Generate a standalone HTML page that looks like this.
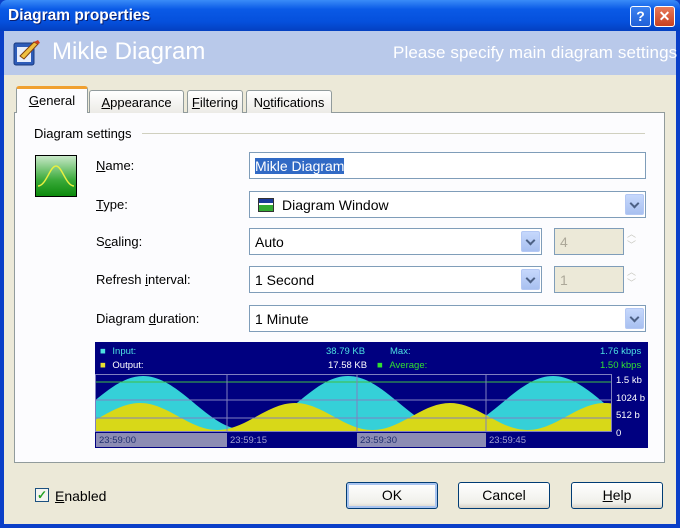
<!DOCTYPE html><html><head><style>
*{box-sizing:border-box;margin:0;padding:0}
body{width:680px;height:528px;overflow:hidden;font-family:"Liberation Sans",sans-serif;font-size:13px;background:#0a3fc8;position:relative}
.a{position:absolute}
.title{left:0;top:0;width:680px;height:31px;background:linear-gradient(#3a8cf8,#0a5ae6 30%,#0550dc 70%,#0440c0);border-radius:7px 7px 0 0}
.title span{position:absolute;left:8px;top:7px;color:#fff;font-weight:bold;font-size:15.5px;text-shadow:1px 1px #0a1e6e}
.tb{top:6px;width:21px;height:21px;border:1px solid #fff;border-radius:3px;color:#fff;font-weight:bold;text-align:center;font-size:14px;line-height:19px}
.win{left:4px;top:31px;width:672px;height:493px;background:#ece9d8}
.hdr{left:4px;top:31px;width:672px;height:44px;background:#b9c9ea}
.lbl{left:96px;font-size:13px;color:#000}
.fld{background:#fff;border:1px solid #7f9db9;height:27px;font-size:14px;padding:5px 0 0 5px}
.dd{position:absolute;right:1px;top:2px;width:19px;height:21px;background:linear-gradient(#c6d8fc,#a8c0f0);border-radius:2px;border:1px solid #b4c8f4}
.dd:after{content:"";position:absolute;left:5px;top:5px;width:5px;height:5px;border-right:2px solid #4d6185;border-bottom:2px solid #4d6185;transform:rotate(45deg)}
.spin{background:#ece9d8;border:1px solid #7f9db9;height:27px;color:#aca899;font-size:14px;padding:5px 0 0 5px}
.btn{top:482px;width:92px;height:27px;border:1px solid #003c74;border-radius:3px;background:linear-gradient(#fff,#f0f0ea 80%,#d6d0c5);text-align:center;line-height:25px;font-size:14px}
.tab{top:90px;height:23px;border:1px solid #919b9c;border-bottom:none;background:linear-gradient(#fff,#ecebe6);font-size:13px;padding:4px 0 0 0;text-align:center;border-radius:3px 3px 0 0;white-space:nowrap}
.ct{font-size:9.5px;color:#fff}
</style></head><body>
<div class="a title"><span>Diagram properties</span>
<div class="a tb" style="left:630px;background:linear-gradient(#3c82f0,#2060d8)">?</div>
<div class="a tb" style="left:654px;background:linear-gradient(#e87a5a,#c84020)">✕</div></div>
<div class="a win"></div>
<div class="a hdr"></div>
<svg class="a" style="left:12px;top:38px" width="30" height="30"><rect x="2" y="5" width="20" height="22" rx="2" fill="#2e5cb8" stroke="#1a3a80"/><rect x="5" y="9" width="14" height="15" fill="#e8eefc"/><path d="M8 18 L22 4 L26 6 L12 21 Z" fill="#f0c040" stroke="#804010"/><path d="M22 4 L26 2 L28 5 L26 6Z" fill="#d04020"/></svg>
<div class="a" style="left:52px;top:38px;color:#fff;font-size:24px">Mikle Diagram</div>
<div class="a" style="left:393px;top:43px;color:#fff;font-size:17px;letter-spacing:0.1px">Please specify main diagram settings</div>
<div class="a" style="left:14px;top:112px;width:651px;height:351px;border:1px solid #919b9c;background:#fcfcfe"></div>
<div class="a tab" style="left:16px;top:86px;width:72px;height:27px;background:#fcfcfe;border-top:3px solid #f0a030;padding-top:4px"><u>G</u>eneral</div>
<div class="a tab" style="left:89px;width:95px"><u>A</u>ppearance</div>
<div class="a tab" style="left:187px;width:56px"><u>F</u>iltering</div>
<div class="a tab" style="left:246px;width:86px">N<u>o</u>tifications</div>
<div class="a" style="left:34px;top:126px;font-size:13px">Diagram settings</div>
<div class="a" style="left:142px;top:133px;width:503px;height:1px;background:#d0d0bf"></div>
<div class="a" style="left:35px;top:155px;width:42px;height:42px;border:1px solid #000;background:linear-gradient(#c8e8c8,#3aaa3a 60%,#0c8a0c)"><svg width="40" height="40"><path d="M2 30 C10 30,14 10,20 10 C26 10,30 30,38 30" stroke="#e8f040" stroke-width="1.5" fill="none"/></svg></div>
<div class="a lbl" style="top:158px"><u>N</u>ame:</div>
<div class="a lbl" style="top:197px"><u>T</u>ype:</div>
<div class="a lbl" style="top:234px">S<u>c</u>aling:</div>
<div class="a lbl" style="top:272px">Refresh <u>i</u>nterval:</div>
<div class="a lbl" style="top:311px">Diagram <u>d</u>uration:</div>
<div class="a fld" style="left:249px;top:152px;width:397px"><span style="background:#316ac5;color:#fff">Mikle Diagram</span></div>
<div class="a fld" style="left:249px;top:191px;width:397px;padding-left:8px"><span style="display:inline-block;width:16px;height:14px;border:1px solid #333;background:linear-gradient(#1a3a9a 35%,#fff 35%,#fff 50%,#3a3 50%);vertical-align:-2px;margin-right:8px"></span>Diagram Window<div class="dd"></div></div>
<div class="a fld" style="left:249px;top:228px;width:293px">Auto<div class="dd"></div></div>
<div class="a spin" style="left:554px;top:228px;width:70px">4</div>
<div class="a" style="left:627px;top:229px;color:#c8c8c0;font-size:9px;line-height:11px">︿<br>﹀</div>
<div class="a fld" style="left:249px;top:266px;width:293px">1 Second<div class="dd"></div></div>
<div class="a spin" style="left:554px;top:266px;width:70px">1</div>
<div class="a" style="left:627px;top:267px;color:#c8c8c0;font-size:9px;line-height:11px">︿<br>﹀</div>
<div class="a fld" style="left:249px;top:305px;width:397px">1 Minute<div class="dd"></div></div>
<div class="a" style="left:95px;top:342px;width:553px;height:106px;background:#000080"></div>
<div class="a ct" style="left:100px;top:346px;color:#4de0e0">■ <span style="margin-left:4px">Input:</span></div>
<div class="a ct" style="left:100px;top:360px;color:#e8e030">■ <span style="margin-left:4px;color:#fff">Output:</span></div>
<div class="a ct" style="left:326px;top:346px;color:#4de0e0">38.79 KB</div>
<div class="a ct" style="left:328px;top:360px">17.58 KB</div>
<div class="a ct" style="left:390px;top:346px;color:#4de0e0">Max:</div>
<div class="a ct" style="left:377px;top:360px;color:#30e030">■ <span style="margin-left:4px">Average:</span></div>
<div class="a ct" style="left:600px;top:346px;color:#4de0e0">1.76 kbps</div>
<div class="a ct" style="left:600px;top:360px;color:#30e030">1.50 kbps</div>
<svg class="a" style="left:95px;top:374px" width="517" height="58">
<rect width="517" height="58" fill="#000080"/>
<path d="M -54.5 56 C -17 56, 11 2, 48 2 C 85 2, 113 56, 150.5 56 C 188 56, 216 2, 253 2 C 290 2, 318 56, 355.5 56 C 393 56, 421 2, 458 2 C 495 2, 523 56, 560.5 56 L 560.5 58 L -54.5 58 Z" fill="#35d0d8"/>
<path d="M -32.5 56 C -4 56, 17 29, 45 29 C 73 29, 94 56, 122.5 56 C 151 56, 172 29, 200 29 C 228 29, 249 56, 277.5 56 C 306 56, 327 29, 355 29 C 383 29, 404 56, 432.5 56 C 461 56, 482 29, 510 29 C 538 29, 559 56, 587.5 56 L 587.5 58 L -32.5 58 Z" fill="#d8d818"/>
<line x1="0" y1="8" x2="517" y2="8" stroke="#40c040"/>
<line x1="0" y1="26" x2="517" y2="26" stroke="#8080c0"/>
<line x1="0" y1="44" x2="517" y2="44" stroke="#8080c0"/>
<line x1="132" y1="0" x2="132" y2="58" stroke="#8080c0"/>
<line x1="262" y1="0" x2="262" y2="58" stroke="#8080c0"/>
<line x1="391" y1="0" x2="391" y2="58" stroke="#8080c0"/>
<rect x="0.5" y="0.5" width="516" height="57" fill="none" stroke="#8080c0"/>
</svg>
<div class="a ct" style="left:616px;top:375px">1.5 kb</div>
<div class="a ct" style="left:616px;top:393px">1024 b</div>
<div class="a ct" style="left:616px;top:410px">512 b</div>
<div class="a ct" style="left:616px;top:428px">0</div>
<div class="a" style="left:96px;top:433px;width:131px;height:14px;background:#8c8cb4"></div>
<div class="a" style="left:357px;top:433px;width:129px;height:14px;background:#8c8cb4"></div>
<div class="a ct" style="left:99px;top:435px;color:#203070">23:59:00</div>
<div class="a ct" style="left:230px;top:435px;color:#a0a0d0">23:59:15</div>
<div class="a ct" style="left:360px;top:435px;color:#203070">23:59:30</div>
<div class="a ct" style="left:489px;top:435px;color:#a0a0d0">23:59:45</div>
<div class="a" style="left:35px;top:488px;width:14px;height:14px;border:1px solid #1c5180;background:#f4f4f0;color:#21a121;font-size:12px;line-height:12px;text-align:center;font-weight:bold">✓</div>
<div class="a" style="left:55px;top:488px;font-size:14px"><u>E</u>nabled</div>
<div class="a btn" style="left:346px;border-color:#003c74;box-shadow:inset 0 0 0 2px #a8c4f0">OK</div>
<div class="a btn" style="left:458px">Cancel</div>
<div class="a btn" style="left:571px"><u>H</u>elp</div>
</body></html>
